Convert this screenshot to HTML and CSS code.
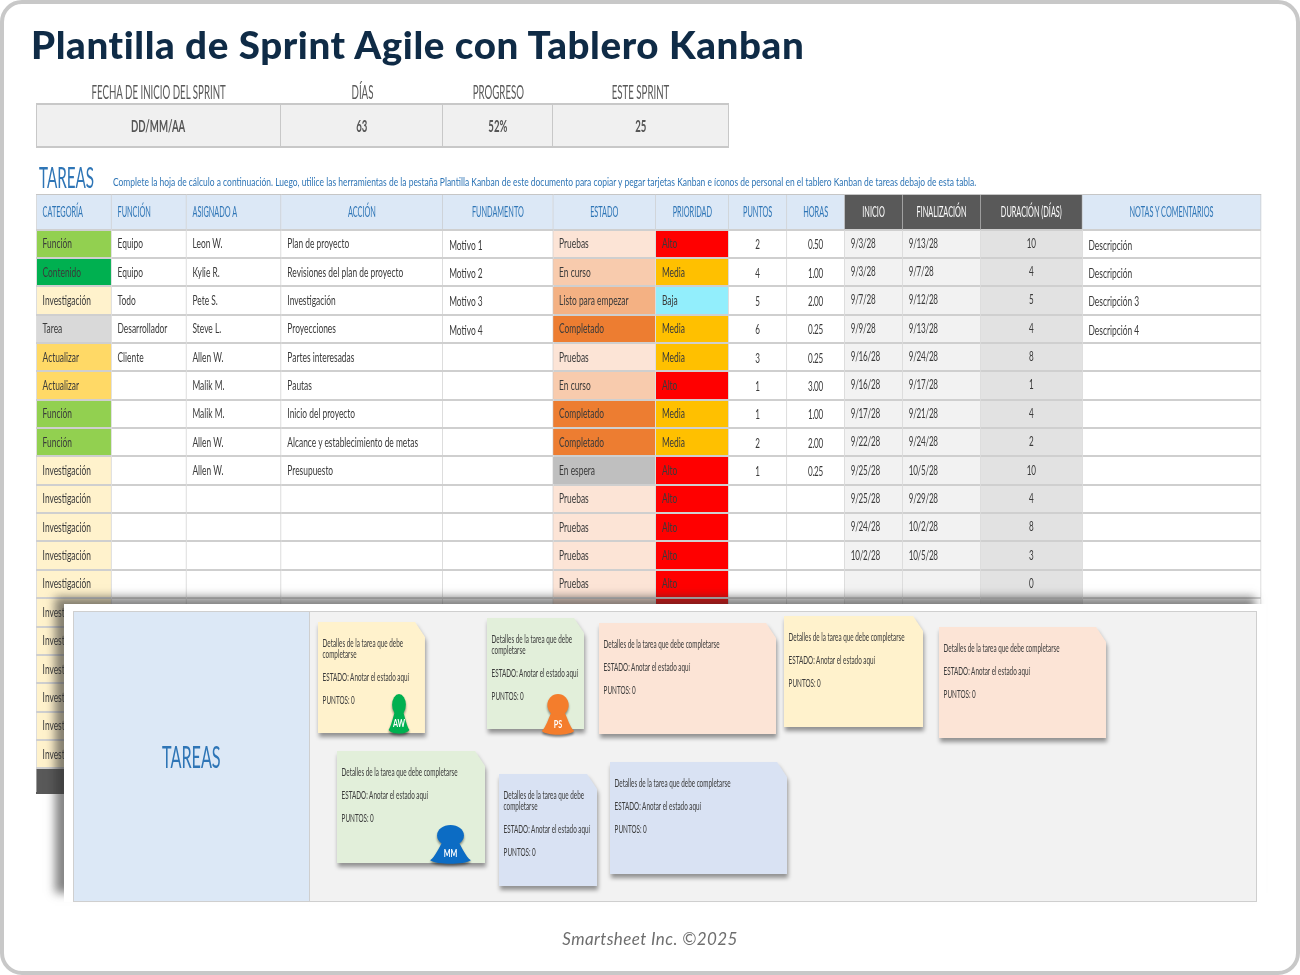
FILE: index.html
```html
<!DOCTYPE html>
<html lang="es">
<head>
  <meta charset="UTF-8" />
  <title>Plantilla de Sprint Agile con Tablero Kanban</title>
  <link rel="stylesheet" href="styles.css">
</head>
<body>
  <svg class="defs" width="0" height="0">
    <symbol id="pawn" viewBox="0 0 40 42" preserveAspectRatio="none">
      <path d="M1 37 C6 33 9 24 13 17 L27 17 C31 24 34 33 39 37 C33 42 7 42 1 37 Z" fill="currentColor"/>
      <ellipse cx="20" cy="11" rx="12.5" ry="11" fill="currentColor"/>
    </symbol>
  </svg>

  <div class="sheet">
    <h1 class="title">Plantilla de Sprint Agile con Tablero Kanban</h1>

    <div class="meta">
      <div class="meta-label w1"><span>FECHA DE INICIO DEL SPRINT</span></div>
      <div class="meta-label w2"><span>DÍAS</span></div>
      <div class="meta-label w3"><span>PROGRESO</span></div>
      <div class="meta-label w4"><span>ESTE SPRINT</span></div>
      <div class="meta-val w1"><span>DD/MM/AA</span></div>
      <div class="meta-val w2"><span>63</span></div>
      <div class="meta-val w3"><span>52%</span></div>
      <div class="meta-val w4"><span>25</span></div>
    </div>

    <div class="tasks-head">
      <span class="tasks-title">TAREAS</span>
      <span class="tasks-note">Complete la hoja de cálculo a continuación. Luego, utilice las herramientas de la pestaña Plantilla Kanban de este documento para copiar y pegar tarjetas Kanban e íconos de personal en el tablero Kanban de tareas debajo de esta tabla.</span>
    </div>

    <table class="tasks">
      <colgroup>
        <col><col><col><col><col><col><col><col><col><col><col><col><col>
      </colgroup>
      <thead>
        <tr>
          <th class="l"><span>CATEGORÍA</span></th><th class="l"><span>FUNCIÓN</span></th><th class="l"><span>ASIGNADO A</span></th><th><span>ACCIÓN</span></th><th><span>FUNDAMENTO</span></th><th><span>ESTADO</span></th><th><span>PRIORIDAD</span></th><th><span>PUNTOS</span></th><th><span>HORAS</span></th><th class="dark"><span>INICIO</span></th><th class="dark"><span>FINALIZACIÓN</span></th><th class="dark"><span>DURACIÓN (DÍAS)</span></th><th><span>NOTAS Y COMENTARIOS</span></th>
        </tr>
      </thead>
      <tbody>
        <tr><td class="func">Función</td><td>Equipo</td><td>Leon W.</td><td>Plan de proyecto</td><td class="low">Motivo 1</td><td class="s-test">Pruebas</td><td class="p-high">Alto</td><td class="c low">2</td><td class="c low">0.50</td><td class="date">9/3/28</td><td class="date">9/13/28</td><td class="dur">10</td><td class="low">Descripción</td></tr>
        <tr><td class="cont">Contenido</td><td>Equipo</td><td>Kylie R.</td><td>Revisiones del plan de proyecto</td><td class="low">Motivo 2</td><td class="s-prog">En curso</td><td class="p-med">Media</td><td class="c low">4</td><td class="c low">1.00</td><td class="date">9/3/28</td><td class="date">9/7/28</td><td class="dur">4</td><td class="low">Descripción</td></tr>
        <tr><td class="inv">Investigación</td><td>Todo</td><td>Pete S.</td><td>Investigación</td><td class="low">Motivo 3</td><td class="s-ready">Listo para empezar</td><td class="p-low">Baja</td><td class="c low">5</td><td class="c low">2.00</td><td class="date">9/7/28</td><td class="date">9/12/28</td><td class="dur">5</td><td class="low">Descripción 3</td></tr>
        <tr><td class="task">Tarea</td><td>Desarrollador</td><td>Steve L.</td><td>Proyecciones</td><td class="low">Motivo 4</td><td class="s-done">Completado</td><td class="p-med">Media</td><td class="c low">6</td><td class="c low">0.25</td><td class="date">9/9/28</td><td class="date">9/13/28</td><td class="dur">4</td><td class="low">Descripción 4</td></tr>
        <tr><td class="upd">Actualizar</td><td>Cliente</td><td>Allen W.</td><td>Partes interesadas</td><td></td><td class="s-test">Pruebas</td><td class="p-med">Media</td><td class="c low">3</td><td class="c low">0.25</td><td class="date">9/16/28</td><td class="date">9/24/28</td><td class="dur">8</td><td></td></tr>
        <tr><td class="upd">Actualizar</td><td></td><td>Malik M.</td><td>Pautas</td><td></td><td class="s-prog">En curso</td><td class="p-high">Alto</td><td class="c low">1</td><td class="c low">3.00</td><td class="date">9/16/28</td><td class="date">9/17/28</td><td class="dur">1</td><td></td></tr>
        <tr><td class="func">Función</td><td></td><td>Malik M.</td><td>Inicio del proyecto</td><td></td><td class="s-done">Completado</td><td class="p-med">Media</td><td class="c low">1</td><td class="c low">1.00</td><td class="date">9/17/28</td><td class="date">9/21/28</td><td class="dur">4</td><td></td></tr>
        <tr><td class="func">Función</td><td></td><td>Allen W.</td><td>Alcance y establecimiento de metas</td><td></td><td class="s-done">Completado</td><td class="p-med">Media</td><td class="c low">2</td><td class="c low">2.00</td><td class="date">9/22/28</td><td class="date">9/24/28</td><td class="dur">2</td><td></td></tr>
        <tr><td class="inv">Investigación</td><td></td><td>Allen W.</td><td>Presupuesto</td><td></td><td class="s-hold">En espera</td><td class="p-high">Alto</td><td class="c low">1</td><td class="c low">0.25</td><td class="date">9/25/28</td><td class="date">10/5/28</td><td class="dur">10</td><td></td></tr>
        <tr><td class="inv">Investigación</td><td></td><td></td><td></td><td></td><td class="s-test">Pruebas</td><td class="p-high">Alto</td><td></td><td></td><td class="date">9/25/28</td><td class="date">9/29/28</td><td class="dur">4</td><td></td></tr>
        <tr><td class="inv">Investigación</td><td></td><td></td><td></td><td></td><td class="s-test">Pruebas</td><td class="p-high">Alto</td><td></td><td></td><td class="date">9/24/28</td><td class="date">10/2/28</td><td class="dur">8</td><td></td></tr>
        <tr><td class="inv">Investigación</td><td></td><td></td><td></td><td></td><td class="s-test">Pruebas</td><td class="p-high">Alto</td><td></td><td></td><td class="date">10/2/28</td><td class="date">10/5/28</td><td class="dur">3</td><td></td></tr>
        <tr><td class="inv">Investigación</td><td></td><td></td><td></td><td></td><td class="s-test">Pruebas</td><td class="p-high">Alto</td><td></td><td></td><td class="date"></td><td class="date"></td><td class="dur">0</td><td></td></tr>
        <tr><td class="inv">Investigación</td><td></td><td></td><td></td><td></td><td class="s-test"></td><td class="p-high"></td><td></td><td></td><td class="date"></td><td class="date"></td><td class="dur"></td><td></td></tr>
        <tr><td class="inv">Investigación</td><td colspan="12"></td></tr>
        <tr><td class="inv">Investigación</td><td colspan="12"></td></tr>
        <tr><td class="inv">Investigación</td><td colspan="12"></td></tr>
        <tr><td class="inv">Investigación</td><td colspan="12"></td></tr>
        <tr><td class="inv">Investigación</td><td colspan="12"></td></tr>
        <tr class="total"><td colspan="13"></td></tr>
      </tbody>
    </table>

    <p class="copyright">Smartsheet Inc. ©2025</p>

    <div class="board-shot">
      <div class="board">
        <div class="board-label"><span>TAREAS</span></div>
        <div class="board-canvas">
          <div class="note n1"><div class="note-body yellow"><p>Detalles de la tarea que debe completarse</p><p>ESTADO: Anotar el estado aquí</p><p>PUNTOS: 0</p></div></div>
          <div class="note n2"><div class="note-body green"><p>Detalles de la tarea que debe completarse</p><p>ESTADO: Anotar el estado aquí</p><p>PUNTOS: 0</p></div></div>
          <div class="note n3"><div class="note-body peach"><p>Detalles de la tarea que debe completarse</p><p>ESTADO: Anotar el estado aquí</p><p>PUNTOS: 0</p></div></div>
          <div class="note n4"><div class="note-body yellow"><p>Detalles de la tarea que debe completarse</p><p>ESTADO: Anotar el estado aquí</p><p>PUNTOS: 0</p></div></div>
          <div class="note n5"><div class="note-body peach"><p>Detalles de la tarea que debe completarse</p><p>ESTADO: Anotar el estado aquí</p><p>PUNTOS: 0</p></div></div>
          <div class="note n6"><div class="note-body green"><p>Detalles de la tarea que debe completarse</p><p>ESTADO: Anotar el estado aquí</p><p>PUNTOS: 0</p></div></div>
          <div class="note n7"><div class="note-body blue"><p>Detalles de la tarea que debe completarse</p><p>ESTADO: Anotar el estado aquí</p><p>PUNTOS: 0</p></div></div>
          <div class="note n8"><div class="note-body blue"><p>Detalles de la tarea que debe completarse</p><p>ESTADO: Anotar el estado aquí</p><p>PUNTOS: 0</p></div></div>

          <div class="pawn pawn-aw"><svg><use href="#pawn"/></svg><span>AW</span></div>
          <div class="pawn pawn-ps"><svg><use href="#pawn"/></svg><span>PS</span></div>
          <div class="pawn pawn-mm"><svg><use href="#pawn"/></svg><span>MM</span></div>
        </div>
      </div>
    </div>
  </div>
</body>
</html>
```

FILE: styles.css
```css
* {
  margin: 0; padding: 0; box-sizing: border-box;
}

html, body {
  width: 1300px;
  height: 975px;
  overflow: hidden;
  background: #fff;
  font-family: 'Lato', 'Liberation Sans', sans-serif;
}

.defs {
  position: absolute;
}

.sheet {
  position: relative;
  width: 1300px;
  height: 975px;
  padding: 0 0 0 32px;
  border: 4px solid #c8c8c8;
  border-radius: 22px;
  filter: blur(0.4px);
}

.title {
  height: 78px;
  margin-left: -5px;
  padding-top: 17px;
  font-size: 38.5px;
  font-weight: 900;
  line-height: 46px;
  letter-spacing: 0.6px;
  color: #0f2b46;
  white-space: nowrap;
}

/* resumen del sprint */
.meta {
  display: grid;
  grid-template-columns: 245px 162px 110px 176px;
  grid-template-rows: 21px 45px;
  width: 693px;
}

.w1 { grid-column: 1; }
.w2 { grid-column: 2; }
.w3 { grid-column: 3; }
.w4 { grid-column: 4; }

.meta-label {
  grid-row: 1;
  display: flex;
  justify-content: center;
  font-size: 19px;
  line-height: 20px;
  color: #595959;
  white-space: nowrap;
}

.meta-label span {
  transform: scaleX(0.51);
}

.meta-val {
  grid-row: 2;
  display: flex;
  align-items: center;
  justify-content: center;
  background: #f0f0f0;
  border: 1px solid #c8c8c8;
  border-width: 2px 1px 2px 0;
  font-size: 17px;
  font-weight: bold;
  color: #555;
}

.meta-val span {
  transform: scaleX(0.565);
}

.meta-val.w1 { border-left-width: 1px; }

.tasks-head {
  display: flex;
  align-items: flex-end;
  height: 46px;
  padding-left: 3px;
  white-space: nowrap;
}

.tasks-title {
  flex: none;
  width: 74px;
  padding-bottom: 1px;
  font-size: 29px;
  line-height: 32px;
  color: #2e75b6;
  transform: scaleX(0.525);
  transform-origin: left;
}

.tasks-note {
  font-size: 12px;
  line-height: 16px;
  padding-bottom: 4px;
  color: #2e75b6;
  transform: scaleX(0.705);
  transform-origin: left;
}

/* tabla de tareas: se comprime a lo ancho como en la captura */
.tasks {
  width: 2043.33px;
  table-layout: fixed;
  border-collapse: collapse;
  font-size: 14px;
  color: #3a3a3a;
  transform: scaleX(0.5994);
  transform-origin: left top;
}

.tasks col:nth-child(1), .tasks col:nth-child(2) { width: 125px; }
.tasks col:nth-child(3) { width: 158.33px; }
.tasks col:nth-child(4) { width: 270px; }
.tasks col:nth-child(5) { width: 183.33px; }
.tasks col:nth-child(6) { width: 171.67px; }
.tasks col:nth-child(7) { width: 121.67px; }
.tasks col:nth-child(8), .tasks col:nth-child(9), .tasks col:nth-child(10) { width: 96.67px; }
.tasks col:nth-child(11) { width: 130px; }
.tasks col:nth-child(12) { width: 170px; }
.tasks col:nth-child(13) { width: 298.33px; }

.tasks th,
.tasks td {
  border: 1px solid #c6c6c6;
  white-space: nowrap;
}

.tasks tbody tr {
  height: 28.37px;
}

.tasks tbody td {
  padding: 0 10px 2px;
  overflow: hidden;
  border-top-width: 2px;
  border-bottom-width: 2px;
  border-color: #cfcfcf #c6c6c6;
}

.tasks thead tr {
  height: 35px;
}

.tasks th {
  font-size: 14.5px;
  font-weight: normal;
  text-align: center;
  color: #2e75b6;
  background: #dce8f6;
}

.tasks th span {
  display: inline-block;
  margin: 0 -40px;
  transform: scaleX(0.84);
}

.tasks th.l {
  padding-left: 10px;
  text-align: left;
}

.tasks th.l span {
  margin: 0;
  transform-origin: left;
}

.tasks th.dark {
  background: #595959;
  color: #fff;
}

.tasks td.low {
  padding-top: 1px;
  padding-bottom: 0;
}

.tasks td.c {
  text-align: center;
}

.tasks td.c,
.tasks td.date,
.tasks td.dur {
  font-size: 13.5px;
  letter-spacing: -0.4px;
}

.func { background: #92d050; }
.cont { background: #00b050; }
.inv { background: #fff2cc; }
.task { background: #d9d9d9; }
.upd { background: #ffd966; }

.s-test { background: #fce4d6; }
.s-prog { background: #f8cbad; }
.s-ready { background: #f4b183; }
.s-done { background: #ed7d31; }
.s-hold { background: #bfbfbf; }

.p-high { background: #ff0000; }
.p-med { background: #ffc000; }
.p-low { background: #92eefc; }

.date { background: #f2f2f2; }
.dur { background: #e2e2e2; text-align: center; }

.tasks tr.total { height: 25px; }
.tasks tr.total td { background: #595959; border-color: #595959; }

.copyright {
  position: absolute;
  left: 0;
  right: 0;
  top: 924px;
  text-align: center;
  font-style: italic;
  font-size: 17px;
  line-height: 22px;
  color: #6e6e6e;
  letter-spacing: 0.4px;
}

/* captura del tablero, encima de la tabla */
.board-shot {
  position: absolute;
  left: 60px;
  top: 600px;
  width: 1202px;
  height: 298px;
  padding: 7px 9px 0 9px;
  background: #fff;
  box-shadow: -10px -8px 9px -1px rgba(50, 50, 50, 0.6);
}

.board {
  display: flex;
  height: 291px;
  border: 1px solid #cfcfcf;
  background: #f2f2f2;
}

.board-label {
  display: flex;
  align-items: center;
  justify-content: center;
  width: 236px;
  flex: none;
  padding-bottom: 2px;
  background: #dce8f6;
  border-right: 1px solid #cfcfcf;
  font-size: 30px;
  color: #2e75b6;
}

.board-label span {
  transform: scaleX(0.54);
}

.board-canvas {
  position: relative;
  flex: 1;
}

.note {
  position: absolute;
  filter: drop-shadow(1px 4px 2px rgba(0, 0, 0, 0.4));
}

.note-body {
  width: 174%;
  height: 100%;
  padding: 14.5px 6px 0 8px;
  clip-path: polygon(0 0, calc(100% - 17.4px) 0, 100% 15px, 100% 100%, 0 100%);
  font-size: 11px;
  line-height: 11.5px;
  color: #3a3a3a;
  transform: scaleX(0.575);
  transform-origin: left top;
}

.note-body p {
  margin-bottom: 11.5px;
}

.yellow { background: #fff2cc; }
.green { background: #e2efda; }
.peach { background: #fce4d6; }
.blue { background: #d9e2f3; }

.n1 { left: 8px; top: 10px; width: 107px; height: 111px; }
.n2 { left: 177px; top: 6px; width: 97px; height: 111px; }
.n3 { left: 289px; top: 11px; width: 177px; height: 111px; }
.n4 { left: 474px; top: 4px; width: 139px; height: 111px; }
.n5 { left: 629px; top: 15px; width: 167px; height: 111px; }
.n6 { left: 27px; top: 139px; width: 148px; height: 112px; }
.n7 { left: 189px; top: 162px; width: 98px; height: 112px; }
.n8 { left: 300px; top: 150px; width: 177px; height: 112px; }

.pawn {
  position: absolute;
  filter: drop-shadow(0 2px 1px rgba(0, 0, 0, 0.45));
}

.pawn svg {
  display: block;
  width: 100%;
  height: 100%;
}

.pawn span {
  position: absolute;
  left: 0;
  right: 0;
  bottom: 6px;
  text-align: center;
  font-size: 12px;
  line-height: 12px;
  font-weight: bold;
  color: #fff;
  transform: scaleX(0.6);
}

.pawn-aw { left: 78px; top: 82px; width: 22px; height: 41px; color: #00b050; }
.pawn-ps { left: 231px; top: 82px; width: 34px; height: 42px; color: #f47d2c; }
.pawn-mm { left: 119px; top: 213px; width: 43px; height: 40px; color: #0c6cc4; }
```
